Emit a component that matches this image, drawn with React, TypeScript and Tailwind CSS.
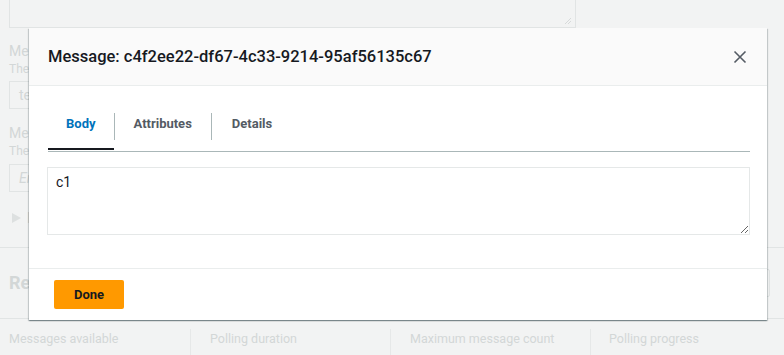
import React from "react";

export default function App() {
  const font = "font-['Roboto','Open_Sans',sans-serif]";
  return (
    <div className={`relative w-[784px] h-[355px] overflow-hidden bg-[#f2f3f3] ${font}`}>
      {/* faded page behind the modal */}
      <div className="text-[#d3d7d7]">
        <div className="pl-[9px]">
          <div className="relative h-[28px] w-[567px] border border-t-0 border-[#e1e4e4]">
            <svg className="absolute right-[3px] bottom-[2px]" width="8" height="8" viewBox="0 0 8 8">
              <path d="M1 7 L7 1 M4 7 L7 4" stroke="#d7dada" strokeWidth="1" />
            </svg>
          </div>
          <div className="mt-[13px] text-[14px] leading-[20px]">Message group ID</div>
          <div className="text-[12px] leading-[16px]">The message group ID is required for FIFO queues.</div>
          <div className="mt-[4px] h-[28px] w-[560px] border border-[#e1e4e4] pl-[9px] text-[14px] leading-[26px]">
            test
          </div>
          <div className="mt-[14px] text-[14px] leading-[20px]">Message deduplication ID</div>
          <div className="text-[12px] leading-[16px]">The token used for deduplication of sent messages.</div>
          <div className="mt-[5px] h-[28px] w-[560px] border border-[#e1e4e4] pl-[9px] text-[14px] italic leading-[26px]">
            Enter message deduplication ID
          </div>
          <div className="mt-[16px] flex items-center gap-[6px] pl-[3px] text-[14px] leading-[20px]">
            <svg width="9" height="10" viewBox="0 0 9 10">
              <path d="M0 0 L9 5 L0 10 Z" fill="#dde0e0" />
            </svg>
            <span>Message attributes</span>
          </div>
        </div>
        <div className="mt-[19px] border-t border-[#e1e4e4]">
          <div className="flex h-[71px] items-center justify-between pl-[9px] pr-[14px] border-b border-[#e1e4e4]">
            <div className="text-[18px] font-bold leading-[24px]">Receive messages</div>
            <div className="h-[28px] w-[90px] rounded-[2px] border border-[#dfe2e2]"></div>
          </div>
          <div className="grid grid-cols-[190px_200px_200px_1fr] pt-[10px] text-[12.5px] leading-[20px]">
            <div className="pl-[9px]">Messages available</div>
            <div className="border-l border-[#e6e8e8] pl-[19px]">Polling duration</div>
            <div className="border-l border-[#e6e8e8] pl-[19px]">Maximum message count</div>
            <div className="border-l border-[#e6e8e8] pl-[18px]">
              Polling progress
              <div className="ml-[6px] mt-[6px] h-[16px] w-[16px] rounded-full border-2 border-[#dfe3e3]"></div>
            </div>
          </div>
        </div>
      </div>

      {/* modal */}
      <div className="absolute left-[29px] top-[28px] flex w-[738px] h-[292px] flex-col bg-white shadow-[0_1px_1px_0_rgba(0,28,36,0.3),1px_1px_1px_0_rgba(0,28,36,0.15),-1px_1px_1px_0_rgba(0,28,36,0.15)]">
        <div className="flex h-[58px] items-center justify-between border-b border-[#eaeded] bg-[#fafafa] pl-[19px] pr-[20px]">
          <div className="text-[16.5px] font-medium leading-[22px] text-[#16191f]">
            Message: c4f2ee22-df67-4c33-9214-95af56135c67
          </div>
          <svg width="14" height="14" viewBox="0 0 14 14">
            <path d="M1.5 1.5 L12.5 12.5 M12.5 1.5 L1.5 12.5" stroke="#545b64" strokeWidth="1.6" />
          </svg>
        </div>
        <div className="flex-1 pl-[18px] pr-[17px] pt-[14px]">
          <div className="pl-[1px]">
            <div className="flex items-start text-[13px] font-bold leading-[20px]">
              <div className="flex h-[50px] items-center border-b-2 border-[#16191f] px-[18px] text-[#0073bb]">Body</div>
              <div className="mt-[13px] h-[27px] w-px bg-[#aab7b8]"></div>
              <div className="flex h-[50px] items-center border-b-2 border-transparent px-[19px] text-[#545b64]">Attributes</div>
              <div className="mt-[13px] h-[27px] w-px bg-[#aab7b8]"></div>
              <div className="flex h-[50px] items-center border-b-2 border-transparent px-[20px] text-[#545b64]">Details</div>
            </div>
            <div className="mt-px h-px bg-[#aab7b8]"></div>
          </div>
          <textarea
            readOnly
            value="c1"
            className={`mt-[15px] block h-[68px] w-[703px] resize-y border border-[#e5e8e8] px-[8px] pt-[4px] text-[14px] leading-[20px] text-[#16191f] outline-none ${font}`}
          />
        </div>
        <div className="h-[52px] border-t border-[#eaeded] pl-[25px] pt-[11px]">
          <button className="h-[29px] w-[70px] rounded-[2px] bg-[#ff9900] text-[13px] font-bold leading-[20px] text-[#16191f]">
            Done
          </button>
        </div>
      </div>
    </div>
  );
}
